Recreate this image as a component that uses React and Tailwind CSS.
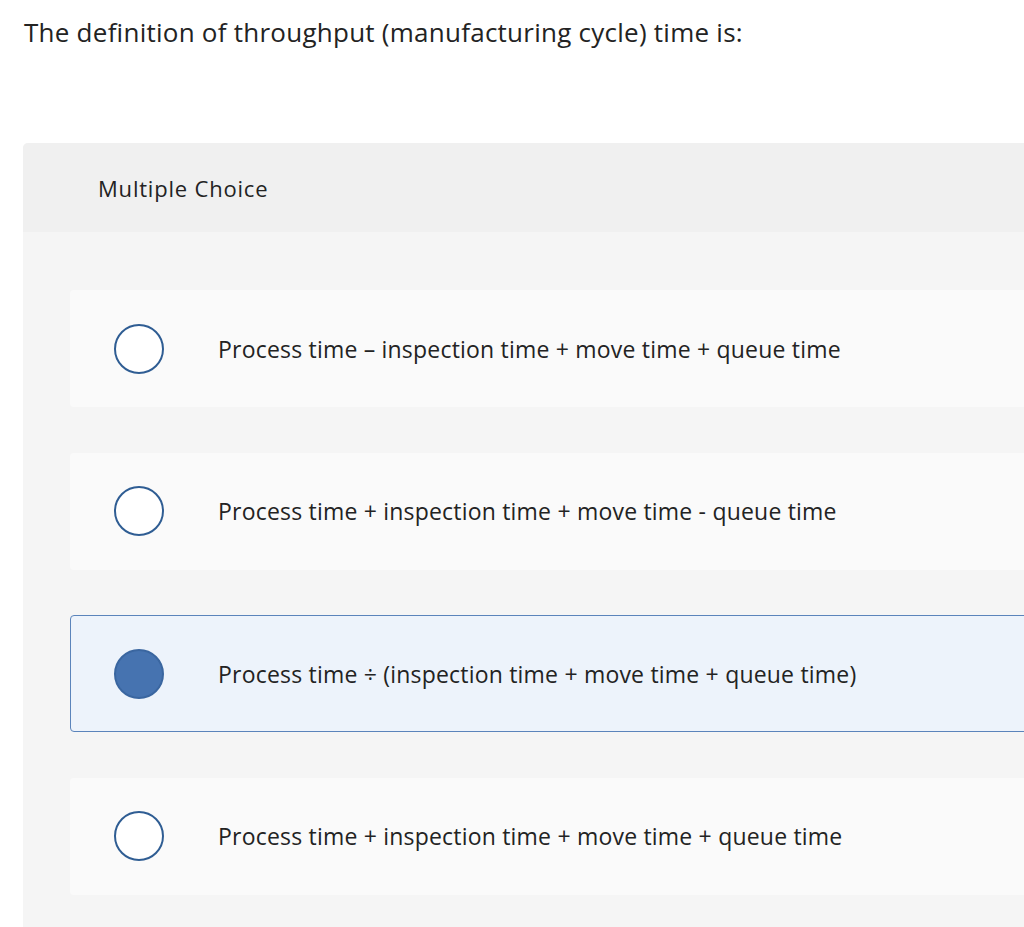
import React from "react";

const OPTIONS = [
  "Process time – inspection time + move time + queue time",
  "Process time + inspection time + move time - queue time",
  "Process time ÷ (inspection time + move time + queue time)",
  "Process time + inspection time + move time + queue time",
];

const SELECTED = 2;

export default function App() {
  return (
    <div className="w-[1024px] h-[927px] overflow-hidden bg-white text-[#232323]" style={{ fontFamily: "'Open Sans', sans-serif" }}>
      <h1 className="pl-[24px] pt-[15px] text-[26px] leading-[34px] tracking-[0.25px] font-normal">
        The definition of throughput (manufacturing cycle) time is:
      </h1>

      <div className="ml-[23px] mt-[94px] w-[1100px] rounded-tl-[5px] bg-[#f5f5f5]">
        <div className="h-[89px] rounded-tl-[5px] bg-[#f0f0f0] pl-[75px] pt-[31px] text-[22px] leading-[28px] tracking-[0.8px]">
          Multiple Choice
        </div>

        <div className="flex flex-col gap-[45.5px] pl-[47px] pt-[58px] pb-[40px]">
          {OPTIONS.map((label, i) => (
            <Option key={i} label={label} selected={i === SELECTED} />
          ))}
        </div>
      </div>
    </div>
  );
}

function Option({ label, selected }) {
  return (
    <div
      className={`flex h-[117px] items-center rounded-[4px] pl-[43px] ${
        selected ? "border border-[#5b84bb] bg-[#edf3fb]" : "border border-transparent bg-[#fafafa]"
      }`}
    >
      <span
        className={`h-[50px] w-[50px] shrink-0 rounded-full border-2 ${
          selected ? "border-[#3a66a0] bg-[#4673b0]" : "border-[#2f5d93] bg-white"
        }`}
      />
      <span className="ml-[54px] text-[23px] leading-[28px] tracking-[0.2px]">{label}</span>
    </div>
  );
}
